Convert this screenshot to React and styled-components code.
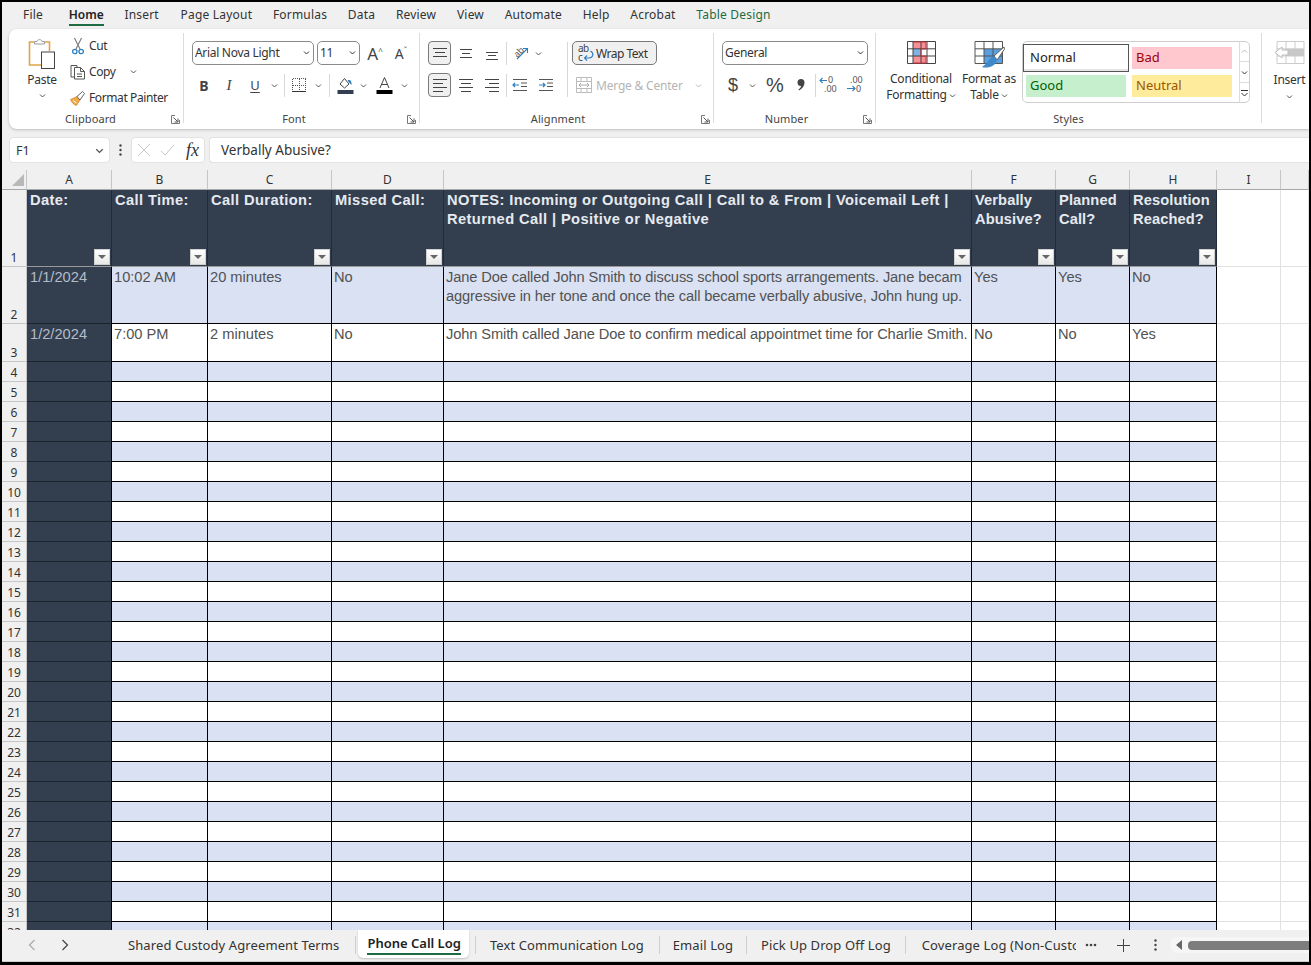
import React from 'react';
import styled, { createGlobalStyle } from 'styled-components';

const GlobalStyle = createGlobalStyle`
  html, body { margin: 0; padding: 0; height: 100%; background: #000; }
  #root { height: 100%; }
  * { box-sizing: border-box; }
`;

const uiFont = `"Noto Sans", "Open Sans", sans-serif`;
const cellFont = `"Liberation Sans", Arial, sans-serif`;

const Frame = styled.div`
  width: 1311px;
  height: 965px;
  border: solid #000;
  border-width: 2px 2px 3px 2px;
  background: #f0f0f0;
  display: flex;
  flex-direction: column;
  overflow: hidden;
  font-family: ${uiFont};
  font-size: 12px;
  color: #333;
`;

const MenuBar = styled.div`
  height: 27px;
  flex: none;
  display: flex;
  align-items: center;
  padding: 0 0 2px 21px;
  gap: 20.7px;
`;

const MenuTab = styled.div`
  position: relative;
  font-size: 12px;
  letter-spacing: 0.2px;
  margin-right: ${p => p.$mr || 0}px;
  font-weight: ${p => (p.$active ? 600 : 400)};
  color: ${p => (p.$green ? '#1c6b41' : p.$active ? '#222' : '#333')};
  ${p => p.$active && `
    letter-spacing: 0;
    &::after {
      content: '';
      position: absolute;
      left: 0; right: 0; bottom: -3px;
      height: 2px;
      background: #1c6b41;
    }
  `}
`;

const Ribbon = styled.div`
  height: 100px;
  flex: none;
  margin-left: 7px;
  background: #fff;
  border-radius: 8px 0 0 8px;
  box-shadow: 0 1px 3px rgba(0, 0, 0, 0.22);
  display: flex;
  overflow: hidden;
`;

const Group = styled.div`
  position: relative;
  width: ${p => p.$w}px;
  flex: none;
  display: flex;
  flex-direction: column;
`;

const GroupBody = styled.div`
  height: 79px;
  display: flex;
  padding: 12px 0 0 ${p => p.$pl || 0}px;
  gap: ${p => p.$gap || 0}px;
`;

const GroupLabel = styled.div`
  height: 21px;
  line-height: 21px;
  text-align: center;
  font-size: 11px;
  letter-spacing: 0.1px;
  color: #444;
  padding-right: ${p => p.$pr || 0}px;
`;

const Launcher = styled.svg`
  position: absolute;
  right: 3px;
  bottom: 5px;
  width: 9px;
  height: 9px;
`;

const GroupDivider = styled.div`
  width: 1px;
  flex: none;
  margin: 4px 0 6px;
  background: #dcdcdc;
`;

const BigButton = styled.div`
  width: ${p => p.$w}px;
  flex: none;
  margin-top: ${p => p.$mt || 0}px;
  display: flex;
  flex-direction: column;
  align-items: center;
  font-size: 12px;
  line-height: 16px;
  letter-spacing: -0.25px;
  color: #333;
  white-space: nowrap;
`;

const BigIcon = styled.div`
  height: ${p => p.$h || 31}px;
  display: flex;
  align-items: flex-start;
  justify-content: center;
  margin-bottom: ${p => p.$mb || 0}px;
`;

const BigChevron = styled.div`
  margin-top: ${p => p.$mt || 4}px;
  line-height: 0;
`;

const LabelLine = styled.div`
  height: 16px;
  display: flex;
  align-items: center;
  gap: 2px;
`;

const SmallColumn = styled.div`
  display: flex;
  flex-direction: column;
  margin-top: -8px;
  padding-left: 1px;
`;

const SmallRow = styled.div`
  height: ${p => p.$h}px;
  flex: none;
  display: flex;
  align-items: center;
  gap: 3px;
  font-size: 12px;
  letter-spacing: -0.4px;
  white-space: nowrap;
`;

const IconSlot = styled.div`
  width: 16px;
  flex: none;
  display: flex;
  justify-content: center;
`;

const CopyChevron = styled.div`
  margin-left: 11px;
  line-height: 0;
`;

const Stack = styled.div`
  display: flex;
  flex-direction: column;
  gap: 8px;
  width: ${p => (p.$w ? `${p.$w}px` : 'auto')};
  flex: none;
`;

const ToolRow = styled.div`
  height: 24px;
  display: flex;
  align-items: center;
  gap: ${p => p.$gap || 0}px;
`;

const Tool = styled.div`
  width: ${p => p.$w}px;
  height: 24px;
  flex: none;
  display: flex;
  align-items: center;
  justify-content: center;
  font-family: ${p => (p.$serif ? '"Liberation Serif", serif' : p.$arial ? cellFont : 'inherit')};
  font-size: ${p => p.$size || 12}px;
  font-weight: ${p => (p.$bold ? 700 : 400)};
  font-style: ${p => (p.$italic ? 'italic' : 'normal')};
  color: #444;
  border-radius: 4px;
  ${p => p.$active && `
    background: #f0f0f0;
    border: 1px solid #7a7a7a;
  `}
`;

const Caret = styled.span`
  font-size: 8px;
  align-self: flex-start;
  margin-top: 4px;
  color: #555;
`;

const Under = styled.span`
  text-decoration: underline;
  text-underline-offset: 2px;
`;

const ToolSep = styled.div`
  width: ${p => p.$w || 6}px;
  height: ${p => p.$h || 24}px;
  flex: none;
  position: relative;
  &::after {
    content: '';
    position: absolute;
    left: 50%;
    top: 1px;
    bottom: 0;
    width: 1px;
    background: #d8d8d8;
  }
`;

const Select = styled.div`
  width: ${p => p.$w}px;
  height: 24px;
  flex: none;
  margin-left: ${p => p.$ml || 0}px;
  border: 1px solid #8a8a8a;
  border-radius: 5px;
  background: #fff;
  display: flex;
  align-items: center;
  justify-content: space-between;
  padding: 0 3px 1px 2px;
  font-size: 12px;
  letter-spacing: -0.3px;
  color: #333;
`;

const WrapButton = styled.div`
  width: 85px;
  height: 24px;
  border: 1px solid #7a7a7a;
  border-radius: 5px;
  background: #f0f0f0;
  display: flex;
  align-items: center;
  gap: 1px;
  padding-left: 4px;
  font-size: 12px;
  letter-spacing: -0.5px;
  white-space: nowrap;
`;

const MergeRow = styled.div`
  height: 24px;
  display: flex;
  align-items: center;
  gap: 4px;
  padding-left: 4px;
  font-size: 12px;
  letter-spacing: -0.2px;
  white-space: nowrap;
  color: #b4b4b4;
`;

const MergeChevron = styled.div`
  margin-left: 8px;
  line-height: 0;
`;

const Gallery = styled.div`
  width: 228px;
  height: 62px;
  margin-left: 3px;
  flex: none;
  border: 1px solid #cfcfcf;
  border-radius: 5px;
  display: grid;
  grid-template-columns: 106px 100px 1fr;
  grid-template-rows: 28px 28px;
  column-gap: 3px;
  align-items: center;
  padding-top: 2px;
`;

const StyleChip = styled.div`
  height: ${p => (p.$selected ? 28 : 22)}px;
  width: ${p => (p.$selected ? '106px' : '100px')};
  justify-self: center;
  background: ${p => p.$bg};
  color: ${p => p.$fg};
  border: ${p => (p.$selected ? '1px solid #555' : 'none')};
  box-shadow: ${p => (p.$selected ? 'inset 0 -2px 0 #e6e6e6' : 'none')};
  display: flex;
  align-items: center;
  padding: 0 0 2px ${p => (p.$selected ? 6 : 4)}px;
  font-size: 13px;
`;

const GalleryScroll = styled.div`
  grid-column: 3;
  grid-row: 1 / 3;
  align-self: stretch;
  margin: -3px 0 -3px 4px;
  border-left: 1px solid #dcdcdc;
  display: flex;
  flex-direction: column;
`;

const ScrollCell = styled.div`
  flex: 1;
  display: flex;
  align-items: center;
  justify-content: center;
  border-top: ${p => (p.$line ? '1px solid #dcdcdc' : 'none')};
`;

const FormulaBar = styled.div`
  height: 26px;
  flex: none;
  margin: 8px 0 7px 7px;
  display: flex;
  align-items: stretch;
`;

const NameBox = styled.div`
  width: 101px;
  background: #fff;
  border: 1px solid #e2e2e2;
  border-radius: 4px;
  display: flex;
  align-items: center;
  justify-content: space-between;
  padding: 0 5px 0 6px;
  font-size: 12.5px;
`;

const Dots = styled.div`
  width: 21px;
  display: flex;
  align-items: center;
  justify-content: center;
`;

const FxBox = styled.div`
  width: 74px;
  background: #fff;
  border: 1px solid #e2e2e2;
  border-radius: 4px;
  display: flex;
  align-items: center;
  gap: 9px;
  padding-left: 5px;
  margin-right: 4px;
`;

const FxText = styled.span`
  font-family: "Liberation Serif", serif;
  font-style: italic;
  font-size: 18px;
  margin-left: 2px;
  color: #333;
`;

const FormulaInput = styled.div`
  flex: 1;
  background: #fff;
  border: 1px solid #e2e2e2;
  border-right: none;
  border-radius: 4px 0 0 4px;
  display: flex;
  align-items: center;
  padding-left: 11px;
  font-size: 13.5px;
  color: #333;
`;

const Sheet = styled.div`
  flex: 1;
  min-height: 0;
  overflow: hidden;
  background: #fff;
  display: grid;
  grid-template-columns: 25px 85px 96px 124px 112px 528px 84px 74px 87px 64px 1fr;
  grid-template-rows: 20px 77px 57px 38px repeat(29, 20px);
  align-content: start;
`;

const Corner = styled.div`
  background: #f0f0f0;
  border-right: 1px solid #c6c6c6;
  border-bottom: 1px solid #a8a8a8;
  position: relative;
  &::after {
    content: '';
    position: absolute;
    right: 2px;
    bottom: 3px;
    border-style: solid;
    border-width: 0 0 12px 12px;
    border-color: transparent transparent #b8b8b8 transparent;
  }
`;

const ColHead = styled.div`
  background: #f0f0f0;
  border-right: 1px solid #c6c6c6;
  border-bottom: 1px solid #a8a8a8;
  display: flex;
  align-items: center;
  justify-content: center;
  font-size: 12px;
  color: #333;
`;

const RowHead = styled.div`
  background: #f0f0f0;
  border-right: 1px solid #c6c6c6;
  border-bottom: 1px solid #c6c6c6;
  display: flex;
  align-items: flex-end;
  justify-content: center;
  line-height: 16px;
  font-size: 12px;
  color: #333;
`;

const HeaderCell = styled.div`
  position: relative;
  background: #333f4f;
  border-right: 1px solid #222c38;
  border-bottom: 1px solid #9a9a9a;
  padding: 1px 3px 0;
  font-family: ${cellFont};
  font-weight: 700;
  font-size: 14.67px;
  line-height: 19px;
  letter-spacing: ${p => (p.$wide ? 0.4 : 0.1)}px;
  color: #e6eaf0;
  white-space: nowrap;
`;

const FilterButton = styled.div`
  position: absolute;
  right: 1px;
  bottom: 1px;
  width: 16px;
  height: 16px;
  background: linear-gradient(#fff, #e8e8e8);
  border: 1px solid #cfcfcf;
  display: flex;
  align-items: center;
  justify-content: center;
  &::after {
    content: '';
    border-style: solid;
    border-width: 4px 4px 0 4px;
    border-color: #666 transparent transparent transparent;
  }
`;

const DateCell = styled.div`
  background: #333f4f;
  border-right: 1px solid #000;
  border-bottom: 1px solid #1b232d;
  padding: 1px 3px 0;
  font-family: ${cellFont};
  font-size: 14.67px;
  line-height: 19px;
  color: #b4bcc8;
  white-space: nowrap;
`;

const Cell = styled.div`
  background: ${p => (p.$band ? '#d9e1f2' : '#fff')};
  border-right: 1px solid #000;
  border-bottom: 1px solid #000;
  padding: 1px 2px 0;
  font-family: ${cellFont};
  font-size: 14.67px;
  line-height: 19px;
  letter-spacing: ${p => (p.$tight ? -0.12 : 0)}px;
  color: #525252;
  white-space: nowrap;
  overflow: hidden;
`;

const EmptyCell = styled.div`
  background: #fff;
  border-right: 1px solid #e2e2e2;
  border-bottom: 1px solid #e2e2e2;
`;

const BottomBar = styled.div`
  height: 32px;
  flex: none;
  padding-bottom: 1px;
  background: #f0f0f0;
  border-bottom: 1px solid #cfcfcf;
  display: flex;
  align-items: center;
  position: relative;
  overflow: hidden;
`;

const NavArrows = styled.div`
  width: 110px;
  flex: none;
  display: flex;
  align-items: center;
  gap: 25px;
  padding-left: 26px;
`;

const SheetTab = styled.div`
  position: relative;
  flex: none;
  display: flex;
  align-items: center;
  padding: 0 ${p => p.$pr ?? p.$px ?? 14}px 0 ${p => p.$px ?? 14}px;
  font-size: 13px;
  letter-spacing: 0.1px;
  white-space: nowrap;
  color: #333;
  ${p => p.$active && `
    align-self: flex-start;
    height: 28px;
    margin: 0 6px 0 2px;
    background: #fff;
    border-radius: 0 0 5px 5px;
    box-shadow: 0 1px 2px rgba(0, 0, 0, 0.2);
    font-weight: 600;
    letter-spacing: 0;
    color: #222;
    padding-bottom: 3px;
    &::after {
      content: '';
      position: absolute;
      left: 9px; right: 8px; bottom: 3px;
      height: 2px;
      background: #1c6b41;
    }
  `}
`;

const TabSep = styled.div`
  width: 1px;
  height: 18px;
  flex: none;
  background: #cfcfcf;
`;

const ClippedTab = styled.div`
  width: 154px;
  margin-left: 16px;
  flex: none;
  overflow: hidden;
  white-space: nowrap;
  font-size: 13px;
  letter-spacing: 0.1px;
`;

const BarGlyph = styled.div`
  width: ${p => p.$w}px;
  flex: none;
  display: flex;
  justify-content: center;
  align-items: center;
`;

const ScrollTrack = styled.div`
  flex: 1;
  height: 16px;
  display: flex;
  align-items: center;
  gap: 6px;
  padding-left: 6px;
  background: #f6f6f6;
  border-radius: 8px 0 0 8px;
`;

const ScrollThumb = styled.div`
  flex: 1;
  height: 9px;
  background: #7d7d7d;
  border-radius: 4px 0 0 4px;
`;

const Small = styled.svg`
  display: block;
  flex: none;
`;

function Chevron({ dir = 'down', size = 7, color = '#555' }) {
  const d = {
    down: 'M1 2.5 L3.5 5 L6 2.5',
    up: 'M1 4.5 L3.5 2 L6 4.5',
  }[dir];
  return (
    <Small width={size} height={size} viewBox="0 0 7 7">
      <path d={d} fill="none" stroke={color} strokeWidth="1" />
    </Small>
  );
}

function LauncherIcon() {
  return (
    <Launcher viewBox="0 0 9 9">
      <path d="M4 .5H.5V8.5H8.5V5" fill="none" stroke="#777" />
      <path d="M2.5 2.5L6.8 6.8M7 3.5V7H3.5" fill="none" stroke="#555" />
    </Launcher>
  );
}

// lines for the align buttons: [x1, x2, y]
function Lines({ rows, color = '#444', w = 18, h = 16 }) {
  return (
    <Small width={w} height={h} viewBox={`0 0 ${w} ${h}`}>
      {rows.map((r, i) => (
        <path key={i} d={`M${r[0]} ${r[2]}.5H${r[1]}`} stroke={r[3] || color} />
      ))}
    </Small>
  );
}

function PasteIcon() {
  return (
    <Small width="30" height="31" viewBox="0 0 30 31">
      <path d="M7 4H2.5V27H14" fill="none" stroke="#e2a24a" strokeWidth="1.6" />
      <path d="M18 4H22.5V13" fill="none" stroke="#e2a24a" strokeWidth="1.6" />
      <path d="M7.5 6V3.5H10C10.5 1 14.5 1 15 3.5H17.5V6Z" fill="#fff" stroke="#999" />
      <rect x="14.5" y="14" width="13" height="16.5" fill="#fff" stroke="#444" />
    </Small>
  );
}

function CutIcon() {
  return (
    <Small width="12" height="18" viewBox="0 0 12 18">
      <path d="M2.5 1L8 12M9.5 1L4 12" stroke="#777" fill="none" strokeWidth="1.1" />
      <circle cx="2.8" cy="14.5" r="2.2" fill="none" stroke="#2f7fc1" strokeWidth="1.3" />
      <circle cx="9.2" cy="14.5" r="2.2" fill="none" stroke="#2f7fc1" strokeWidth="1.3" />
    </Small>
  );
}

function CopyIcon() {
  return (
    <Small width="16" height="16" viewBox="0 0 16 16">
      <path d="M4 13H1V1.5H7V3.5" fill="none" stroke="#555" />
      <path d="M4.5 3.5H10.5L14.5 7.5V15H4.5Z" fill="#fff" stroke="#555" />
      <path d="M10.5 3.5V7.5H14.5M7 10H12M7 12.5H12" fill="none" stroke="#555" />
    </Small>
  );
}

function PainterIcon() {
  return (
    <Small width="16" height="16" viewBox="0 0 16 16">
      <path d="M0.5 9.5L7 6.5L10 10L6.5 15.5C4 15 1.5 12.5 0.5 9.5Z" fill="#f0a848" stroke="#c47a20" strokeWidth=".6" />
      <path d="M7 6.5L12.5 1.5L14.5 3.5L10 10Z" fill="#fff" stroke="#555" strokeWidth=".9" />
      <path d="M3 10.5L6.5 13" stroke="#fff" />
    </Small>
  );
}

function BorderIcon() {
  return (
    <Small width="16" height="16" viewBox="0 0 16 16" shapeRendering="crispEdges">
      <path d="M1.5 1.5H14.5M1.5 1.5V14M14.5 1.5V14M8 1.5V14M1.5 8H14.5" fill="none" stroke="#555" strokeDasharray="1 1" />
      <path d="M1 14.5H15" stroke="#333" strokeWidth="1" />
    </Small>
  );
}

function FillIcon() {
  return (
    <Small width="17" height="17" viewBox="0 0 17 17">
      <path d="M7.5 1.5L3 7L7.5 11L12 7Z" fill="#fff" stroke="#444" />
      <path d="M10.5 3.5C13 2 15 4 14.5 8L13 6.5Z" fill="#2f7fc1" />
      <rect x="0.5" y="13" width="16" height="4" fill="#333f50" />
    </Small>
  );
}

function ColorAIcon() {
  return (
    <Small width="17" height="18" viewBox="0 0 17 18">
      <path d="M4 12L8.5 1.5L13 12M5.5 8.5H11.5" fill="none" stroke="#444" />
      <rect x="0.5" y="14" width="16" height="4" fill="#000" />
    </Small>
  );
}

function CommaIcon() {
  return (
    <Small width="10" height="14" viewBox="0 0 10 14">
      <path d="M5 1A3.5 3.5 0 0 1 8.5 4.5C8.5 8 6 11 3 12.5L2.4 11.5C4 10.5 5 9.2 5 8A3.5 3.5 0 0 1 5 1Z" fill="#444" />
    </Small>
  );
}

function OrientIcon() {
  return (
    <Small width="18" height="16" viewBox="0 0 18 16">
      <text x="2" y="11" fontSize="9" fill="#555" transform="rotate(-45 6 8)" fontFamily="Noto Sans, sans-serif">ab</text>
      <path d="M5 14L15 4M11 3.5H15.5V8" fill="none" stroke="#2f7fc1" strokeWidth="1.1" />
    </Small>
  );
}

function WrapIcon() {
  return (
    <Small width="18" height="20" viewBox="0 0 18 20">
      <text x="1" y="9" fontSize="10" fill="#444" fontFamily="Noto Sans, sans-serif">ab</text>
      <text x="1" y="18" fontSize="10" fill="#444" fontFamily="Noto Sans, sans-serif">c</text>
      <path d="M13.5 8C17.5 10.5 16 15 12 15H8M10 12.5L7.5 15L10 17.5" fill="none" stroke="#2f7fc1" strokeWidth="1.1" />
    </Small>
  );
}

function MergeIcon() {
  return (
    <Small width="16" height="16" viewBox="0 0 16 16">
      <path d="M.5 .5H15.5V15.5H.5ZM.5 4.5H15.5M.5 11.5H15.5M5 .5V4.5M11 .5V4.5M5 11.5V15.5M11 11.5V15.5" fill="none" stroke="#bbb" />
      <path d="M3 8H13M5 6L3 8L5 10M11 6L13 8L11 10" fill="none" stroke="#aaa" />
    </Small>
  );
}

function IndentIcon({ flip }) {
  const arrow = flip ? 'M1 8H7M5 6L7 8L5 10' : 'M1 8H7M3 6L1 8L3 10';
  return (
    <Small width="16" height="16" viewBox="0 0 16 16">
      <path d="M1 2.5H15M9 6H15M9 9.5H15M1 13.5H15" fill="none" stroke="#555" />
      <path d={arrow} fill="none" stroke="#2f7fc1" strokeWidth="1.2" />
    </Small>
  );
}

function DecimalIcon({ more }) {
  return (
    <Small width="20" height="20" viewBox="0 0 20 20">
      <text x={more ? 4 : 9} y="8" fontSize="9" fill="#555" fontFamily="Noto Sans, sans-serif">{more ? '.00' : '0'}</text>
      <text x={more ? 10 : 5} y="17" fontSize="9" fill="#555" fontFamily="Noto Sans, sans-serif">{more ? '0' : '.00'}</text>
      {more
        ? <path d="M1 13.5H9M6.5 11L9 13.5L6.5 16" fill="none" stroke="#2f7fc1" strokeWidth="1.1" />
        : <path d="M1 5.5H8M3.5 3L1 5.5L3.5 8" fill="none" stroke="#2f7fc1" strokeWidth="1.1" />}
    </Small>
  );
}

function ConditionalIcon() {
  return (
    <Small width="29" height="23" viewBox="0 0 29 23">
      <rect x="6" y="1" width="13" height="7" fill="#f78f97" />
      <rect x="6" y="8" width="8" height="7" fill="#7fb2e5" />
      <rect x="6" y="15" width="13" height="7" fill="#f78f97" />
      <path d="M.5 .5H28.5V22.5H.5ZM.5 7.8H28.5M.5 15H28.5M6 .5V22.5M14 .5V22.5M20 .5V22.5" fill="none" stroke="#444" />
      <path d="M6 1H19V8H14V15H19V22H6" fill="none" stroke="#c9303c" />
    </Small>
  );
}

function TableIcon() {
  return (
    <Small width="31" height="28" viewBox="0 0 31 28">
      <rect x="10" y="8" width="18" height="14" fill="#5a9fe0" />
      <path d="M1 .5H28.5V22.5H1ZM1 7.8H28.5M1 15H28.5M10 .5V22.5M19 .5V22.5" fill="none" stroke="#555" />
      <path d="M30 6L20 15L23 19L30.5 8Z" fill="#fff" stroke="#555" strokeWidth=".9" />
      <path d="M20 15C15 17 15 21 8 26C14 27.5 21 26 23 19Z" fill="#3f88c9" />
    </Small>
  );
}

function InsertIcon() {
  return (
    <Small width="31" height="23" viewBox="0 0 31 23">
      <path d="M3 .5H30V22.5H3ZM3 7.8H30M3 15H30M12 .5V22.5M21 .5V22.5" fill="none" stroke="#ccc" />
      <rect x="12" y="8" width="18" height="7" fill="#c8c8c8" />
      <path d="M1 11.5L8 6V9H14V14H8V17Z" fill="#fff" stroke="#bbb" />
    </Small>
  );
}

function ScrollMoreIcon() {
  return (
    <Small width="9" height="9" viewBox="0 0 9 9">
      <path d="M1 1.5H8M1.5 4L4.5 7L7.5 4" fill="none" stroke="#333" />
    </Small>
  );
}

function NavArrow({ back }) {
  return (
    <Small width="8" height="12" viewBox="0 0 8 12">
      <path d={back ? 'M6.5 1L1.5 6L6.5 11' : 'M1.5 1L6.5 6L1.5 11'} fill="none" stroke={back ? '#aaa' : '#444'} strokeWidth="1.2" />
    </Small>
  );
}

const menu = [
  { t: 'File', mr: 5 }, { t: 'Home', active: true }, { t: 'Insert', mr: 1 }, { t: 'Page Layout' },
  { t: 'Formulas' }, { t: 'Data' }, { t: 'Review' }, { t: 'View' }, { t: 'Automate' }, { t: 'Help' }, { t: 'Acrobat' },
  { t: 'Table Design', green: true },
];

const columns = ['A', 'B', 'C', 'D', 'E', 'F', 'G', 'H', 'I', ''];

const headers = [
  <>Date:</>,
  <>Call Time:</>,
  <>Call Duration:</>,
  <>Missed Call:</>,
  <>NOTES: Incoming or Outgoing Call | Call to &amp; From | Voicemail Left |<br />Returned Call | Positive or Negative</>,
  <>Verbally<br />Abusive?</>,
  <>Planned<br />Call?</>,
  <>Resolution<br />Reached?</>,
];

const entries = {
  2: ['1/1/2024', '10:02 AM', '20 minutes', 'No',
    <>Jane Doe called John Smith to discuss school sports arrangements. Jane becam<br />aggressive in her tone and once the call became verbally abusive, John hung up.</>,
    'Yes', 'Yes', 'No'],
  3: ['1/2/2024', '7:00 PM', '2 minutes', 'No',
    'John Smith called Jane Doe to confirm medical appointmet time for Charlie Smith.',
    'No', 'No', 'Yes'],
};

const rowNumbers = Array.from({ length: 31 }, (_, i) => i + 2);

function SheetRow({ n }) {
  const data = entries[n] || [];
  const band = n % 2 === 0;
  return (
    <>
      <RowHead>{n}</RowHead>
      <DateCell>{data[0]}</DateCell>
      {[1, 2, 3, 4, 5, 6, 7].map(i => (
        <Cell key={i} $band={band} $tight={i === 4}>{data[i]}</Cell>
      ))}
      <EmptyCell />
      <EmptyCell />
    </>
  );
}

export default function App() {
  return (
    <>
      <GlobalStyle />
      <Frame>
        <MenuBar>
          {menu.map(m => (
            <MenuTab key={m.t} $active={m.active} $green={m.green} $mr={m.mr}>{m.t}</MenuTab>
          ))}
        </MenuBar>

        <Ribbon>
          <Group $w={174}>
            <GroupBody $pl={16} $gap={10}>
              <BigButton $w={34} $mt={-3}>
                <BigIcon $h={31} $mb={3}><PasteIcon /></BigIcon>
                Paste
                <BigChevron><Chevron /></BigChevron>
              </BigButton>
              <SmallColumn>
                <SmallRow $h={25}><IconSlot><CutIcon /></IconSlot>Cut</SmallRow>
                <SmallRow $h={27}><IconSlot><CopyIcon /></IconSlot>Copy<CopyChevron><Chevron /></CopyChevron></SmallRow>
                <SmallRow $h={25}><IconSlot><PainterIcon /></IconSlot>Format Painter</SmallRow>
              </SmallColumn>
            </GroupBody>
            <GroupLabel $pr={11}>Clipboard</GroupLabel>
            <LauncherIcon />
          </Group>
          <GroupDivider />

          <Group $w={235}>
            <GroupBody $pl={8}>
              <Stack>
                <ToolRow>
                  <Select $w={122}>Arial Nova Light<Chevron color="#333" /></Select>
                  <Select $w={43} $ml={3}>11<Chevron color="#333" /></Select>
                  <Tool $w={30} $size={17}>A<Caret>^</Caret></Tool>
                  <Tool $w={22} $size={14}>A<Caret>ˇ</Caret></Tool>
                </ToolRow>
                <ToolRow>
                  <Tool $w={24} $bold $size={14}>B</Tool>
                  <Tool $w={26} $italic $size={15} $serif>I</Tool>
                  <Tool $w={26} $size={13}><Under>U</Under></Tool>
                  <Tool $w={12}><Chevron /></Tool>
                  <ToolSep $w={8} />
                  <Tool $w={22}><BorderIcon /></Tool>
                  <Tool $w={16}><Chevron /></Tool>
                  <ToolSep $w={6} />
                  <Tool $w={26}><FillIcon /></Tool>
                  <Tool $w={10}><Chevron /></Tool>
                  <Tool $w={32}><ColorAIcon /></Tool>
                  <Tool $w={8}><Chevron /></Tool>
                </ToolRow>
              </Stack>
            </GroupBody>
            <GroupLabel $pr={15}>Font</GroupLabel>
            <LauncherIcon />
          </Group>
          <GroupDivider />

          <Group $w={293}>
            <GroupBody $pl={8}>
              <Stack $w={133}>
                <ToolRow>
                  <Tool $w={23} $active><Lines rows={[[2, 16, 3], [4, 14, 7], [2, 16, 11]]} /></Tool>
                  <Tool $w={30}><Lines rows={[[3, 15, 4], [5, 13, 8], [3, 15, 12]]} /></Tool>
                  <Tool $w={22}><Lines rows={[[3, 15, 7], [5, 13, 10], [3, 15, 14]]} /></Tool>
                  <ToolSep />
                  <Tool $w={24}><OrientIcon /></Tool>
                  <Tool $w={10}><Chevron /></Tool>
                </ToolRow>
                <ToolRow>
                  <Tool $w={23} $active><Lines rows={[[2, 16, 2], [2, 12, 6], [2, 16, 10], [2, 12, 14]]} /></Tool>
                  <Tool $w={30}><Lines rows={[[2, 16, 2], [4, 14, 6], [2, 16, 10], [4, 14, 14]]} /></Tool>
                  <Tool $w={22}><Lines rows={[[2, 16, 2], [6, 16, 6], [2, 16, 10], [6, 16, 14]]} /></Tool>
                  <ToolSep />
                  <Tool $w={22}><IndentIcon /></Tool>
                  <Tool $w={30}><IndentIcon flip /></Tool>
                </ToolRow>
              </Stack>
              <ToolSep $w={11} $h={56} />
              <Stack>
                <WrapButton><WrapIcon />Wrap Text</WrapButton>
                <MergeRow><MergeIcon />Merge &amp; Center<MergeChevron><Chevron color="#bbb" /></MergeChevron></MergeRow>
              </Stack>
            </GroupBody>
            <GroupLabel $pr={17}>Alignment</GroupLabel>
            <LauncherIcon />
          </Group>
          <GroupDivider />

          <Group $w={161}>
            <GroupBody $pl={8}>
              <Stack>
                <Select $w={146}>General<Chevron color="#333" /></Select>
                <ToolRow>
                  <Tool $w={22} $size={18} $arial>$</Tool>
                  <Tool $w={16}><Chevron /></Tool>
                  <Tool $w={30} $size={20} $arial>%</Tool>
                  <Tool $w={22}><CommaIcon /></Tool>
                  <ToolSep />
                  <Tool $w={22}><DecimalIcon /></Tool>
                  <Tool $w={32}><DecimalIcon more /></Tool>
                </ToolRow>
              </Stack>
            </GroupBody>
            <GroupLabel $pr={16}>Number</GroupLabel>
            <LauncherIcon />
          </Group>
          <GroupDivider />

          <Group $w={385}>
            <GroupBody $pl={7}>
              <BigButton $w={76}>
                <BigIcon $h={30}><ConditionalIcon /></BigIcon>
                Conditional
                <LabelLine>Formatting<Chevron /></LabelLine>
              </BigButton>
              <BigButton $w={60}>
                <BigIcon $h={30}><TableIcon /></BigIcon>
                Format as
                <LabelLine>Table<Chevron /></LabelLine>
              </BigButton>
              <Gallery>
                <StyleChip $selected $bg="#fff" $fg="#222">Normal</StyleChip>
                <StyleChip $bg="#ffc7ce" $fg="#9c0006">Bad</StyleChip>
                <GalleryScroll>
                  <ScrollCell><Chevron dir="up" color="#bbb" /></ScrollCell>
                  <ScrollCell $line><Chevron color="#333" /></ScrollCell>
                  <ScrollCell $line><ScrollMoreIcon /></ScrollCell>
                </GalleryScroll>
                <StyleChip $bg="#c6efce" $fg="#006100">Good</StyleChip>
                <StyleChip $bg="#ffeb9c" $fg="#9c5700">Neutral</StyleChip>
              </Gallery>
            </GroupBody>
            <GroupLabel>Styles</GroupLabel>
          </Group>
          <GroupDivider />

          <Group $w={48}>
            <GroupBody $pl={12}>
              <BigButton $w={31}>
                <BigIcon $h={31}><InsertIcon /></BigIcon>
                Insert
                <BigChevron $mt={5}><Chevron /></BigChevron>
              </BigButton>
            </GroupBody>
          </Group>
        </Ribbon>

        <FormulaBar>
          <NameBox>F1<Chevron size={9} /></NameBox>
          <Dots>
            <Small width="3" height="12" viewBox="0 0 3 12">
              <circle cx="1.5" cy="1.5" r="1.2" fill="#444" />
              <circle cx="1.5" cy="6" r="1.2" fill="#444" />
              <circle cx="1.5" cy="10.5" r="1.2" fill="#444" />
            </Small>
          </Dots>
          <FxBox>
            <Small width="14" height="14" viewBox="0 0 14 14">
              <path d="M1 1L13 13M13 1L1 13" stroke="#c8c8c8" />
            </Small>
            <Small width="15" height="14" viewBox="0 0 15 14">
              <path d="M1 8L5 12L14 2" fill="none" stroke="#c8c8c8" />
            </Small>
            <FxText>fx</FxText>
          </FxBox>
          <FormulaInput>Verbally Abusive?</FormulaInput>
        </FormulaBar>

        <Sheet>
          <Corner />
          {columns.map((c, i) => <ColHead key={i}>{c}</ColHead>)}

          <RowHead>1</RowHead>
          {headers.map((h, i) => (
            <HeaderCell key={i} $wide={i < 5}>{h}<FilterButton /></HeaderCell>
          ))}
          <EmptyCell />
          <EmptyCell />

          {rowNumbers.map(n => <SheetRow key={n} n={n} />)}
        </Sheet>

        <BottomBar>
          <NavArrows>
            <NavArrow back />
            <NavArrow />
          </NavArrows>
          <SheetTab $px={16}>Shared Custody Agreement Terms</SheetTab>
          <TabSep />
          <SheetTab $active $px={9} $pr={8}>Phone Call Log</SheetTab>
          <TabSep />
          <SheetTab $pr={15}>Text Communication Log</SheetTab>
          <TabSep />
          <SheetTab $px={13}>Email Log</SheetTab>
          <TabSep />
          <SheetTab>Pick Up Drop Off Log</SheetTab>
          <TabSep />
          <ClippedTab>Coverage Log (Non-Custodial)</ClippedTab>
          <BarGlyph $w={30}>
            <Small width="12" height="4" viewBox="0 0 12 4">
              <circle cx="2" cy="2" r="1.3" fill="#444" />
              <circle cx="6" cy="2" r="1.3" fill="#444" />
              <circle cx="10" cy="2" r="1.3" fill="#444" />
            </Small>
          </BarGlyph>
          <BarGlyph $w={36}>
            <Small width="13" height="13" viewBox="0 0 13 13">
              <path d="M6.5 0V13M0 6.5H13" stroke="#444" />
            </Small>
          </BarGlyph>
          <BarGlyph $w={28}>
            <Small width="3" height="12" viewBox="0 0 3 12">
              <circle cx="1.5" cy="1.5" r="1.2" fill="#444" />
              <circle cx="1.5" cy="6" r="1.2" fill="#444" />
              <circle cx="1.5" cy="10.5" r="1.2" fill="#444" />
            </Small>
          </BarGlyph>
          <ScrollTrack>
            <Small width="6" height="10" viewBox="0 0 6 10"><path d="M6 0V10L0 5Z" fill="#666" /></Small>
            <ScrollThumb />
          </ScrollTrack>
        </BottomBar>
      </Frame>
    </>
  );
}
